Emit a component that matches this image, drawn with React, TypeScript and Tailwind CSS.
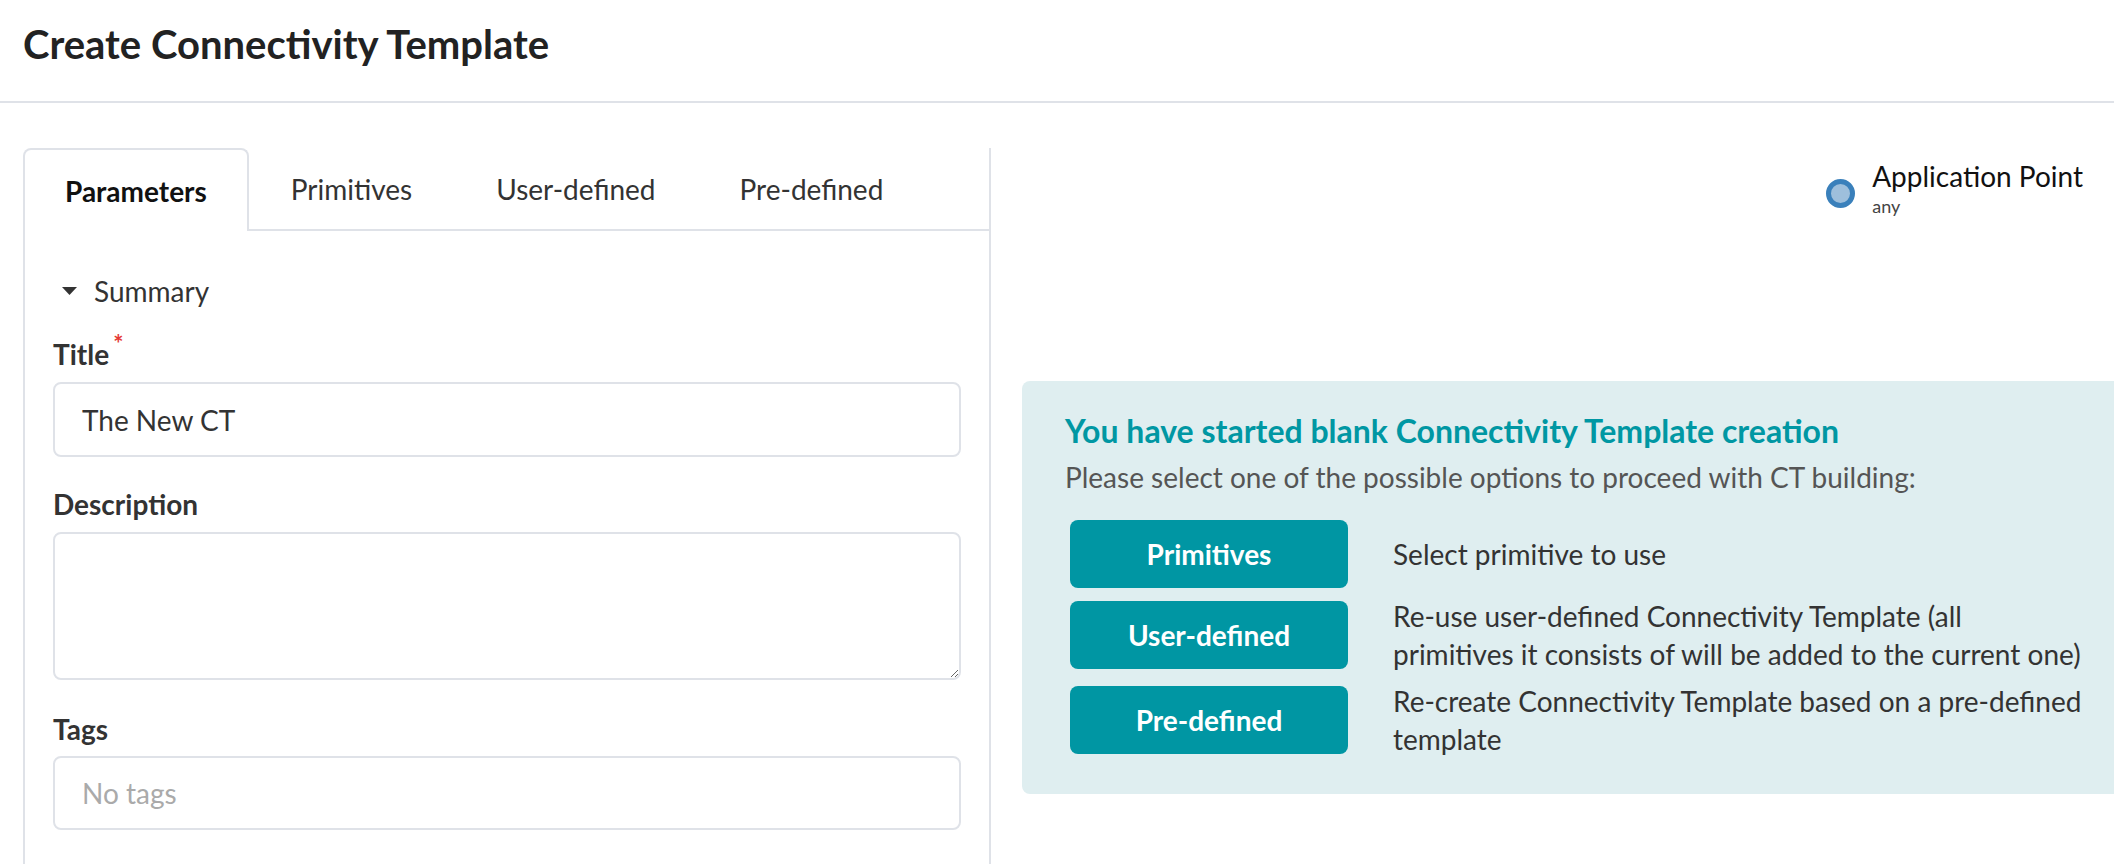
import React from 'react'

const tabs = ['Parameters', 'Primitives', 'User-defined', 'Pre-defined']

const options = [
  { label: 'Primitives', text: 'Select primitive to use' },
  {
    label: 'User-defined',
    text: 'Re-use user-defined Connectivity Template (all primitives it consists of will be added to the current one)',
  },
  { label: 'Pre-defined', text: 'Re-create Connectivity Template based on a pre-defined template' },
]

export default function App() {
  return (
    <div className="h-[864px] w-[2114px] overflow-hidden bg-white text-[#333] font-['Lato','Open_Sans',sans-serif]">
      {/* Header */}
      <div className="flex h-[103px] items-center border-b-2 border-[#dfe2e8] pl-[23px] pb-[14px]">
        <h1 className="text-[40px] font-bold leading-none text-[#222]">Create Connectivity Template</h1>
      </div>

      <div className="flex">
        {/* Left: tabs + form */}
        <div className="ml-[23px] mt-[45px] w-[968px] shrink-0">
          <div className="flex h-[83px]">
            {tabs.map((t, i) =>
              i === 0 ? (
                <div
                  key={t}
                  className="flex items-center rounded-t-[8px] border-2 border-b-0 border-[#dfe2e8] px-[40px] text-[28px] font-bold text-[#111]"
                >
                  {t}
                </div>
              ) : (
                <div
                  key={t}
                  className="flex items-center border-b-2 border-[#dfe2e8] px-[42px] text-[28px] text-[#333]"
                >
                  {t}
                </div>
              )
            )}
            <div className="flex-1 border-b-2 border-r-2 border-[#dfe2e8]" />
          </div>

          <div className="h-[700px] border-x-2 border-[#dfe2e8] px-[28px] pt-[42px]">
            <div className="flex h-[36px] items-center gap-[16px] pl-[8px]">
              <svg width="17" height="10" viewBox="0 0 17 10">
                <path d="M1 1h15l-7.5 8z" fill="#333" />
              </svg>
              <span className="text-[28px] text-[#333]">Summary</span>
            </div>

            <div className="mt-[27px] flex h-[36px] items-center text-[28px] font-bold">
              Title
              <span className="ml-[4px] -mt-[20px] text-[24px] leading-none text-[#e53935]">*</span>
            </div>
            <div className="mt-[10px] flex h-[75px] items-center rounded-[8px] border-2 border-[#dfe2e8] px-[27px] text-[28px] text-[#333]">
              The New CT
            </div>

            <div className="mt-[29px] flex h-[36px] items-center text-[28px] font-bold">Description</div>
            <textarea className="mt-[10px] block h-[148px] w-full rounded-[8px] border-2 border-[#dfe2e8] px-[27px] py-[16px] text-[28px] outline-none" />

            <div className="mt-[31px] flex h-[36px] items-center text-[28px] font-bold">Tags</div>
            <div className="mt-[9px] flex h-[74px] items-center rounded-[8px] border-2 border-[#dfe2e8] px-[27px] text-[28px] text-[#aaa]">
              No tags
            </div>
          </div>
        </div>

        {/* Right side */}
        <div className="w-[1123px] shrink-0 overflow-hidden pt-[56px]">
          <div className="flex justify-end pr-[31px]">
            <div className="flex items-start gap-[17px]">
              <div className="mt-[20px] h-[29px] w-[29px] rounded-full border-[5px] border-[#3a80bb] bg-[#9ebfdc]" />
              <div className="flex flex-col">
                <span className="text-[28px] leading-[34px] text-[#111]">Application Point</span>
                <span className="mt-[2px] text-[18px] leading-[22px] text-[#444]">any</span>
              </div>
            </div>
          </div>

          <div className="ml-[31px] mt-[164px] rounded-l-[8px] bg-[#dfeef0] pl-[43px] pt-[30px] pb-[36px]">
            <div className="text-[32px] font-bold leading-[40px] text-[#0097a3]">
              You have started blank Connectivity Template creation
            </div>
            <div className="mt-[8px] text-[28px] leading-[36px] text-[#555]">
              Please select one of the possible options to proceed with CT building:
            </div>
            <div className="mt-[25px] flex flex-col gap-[9px] pl-[5px]">
              {options.map((o) => (
                <div key={o.label} className="flex items-center gap-[45px]">
                  <button className="flex h-[68px] w-[278px] shrink-0 items-center justify-center rounded-[8px] bg-[#0096a3] text-[28px] font-bold text-white">
                    {o.label}
                  </button>
                  <div className="w-[694px] text-[28px] leading-[38px] text-[#333]">{o.text}</div>
                </div>
              ))}
            </div>
          </div>
        </div>
      </div>
    </div>
  )
}
